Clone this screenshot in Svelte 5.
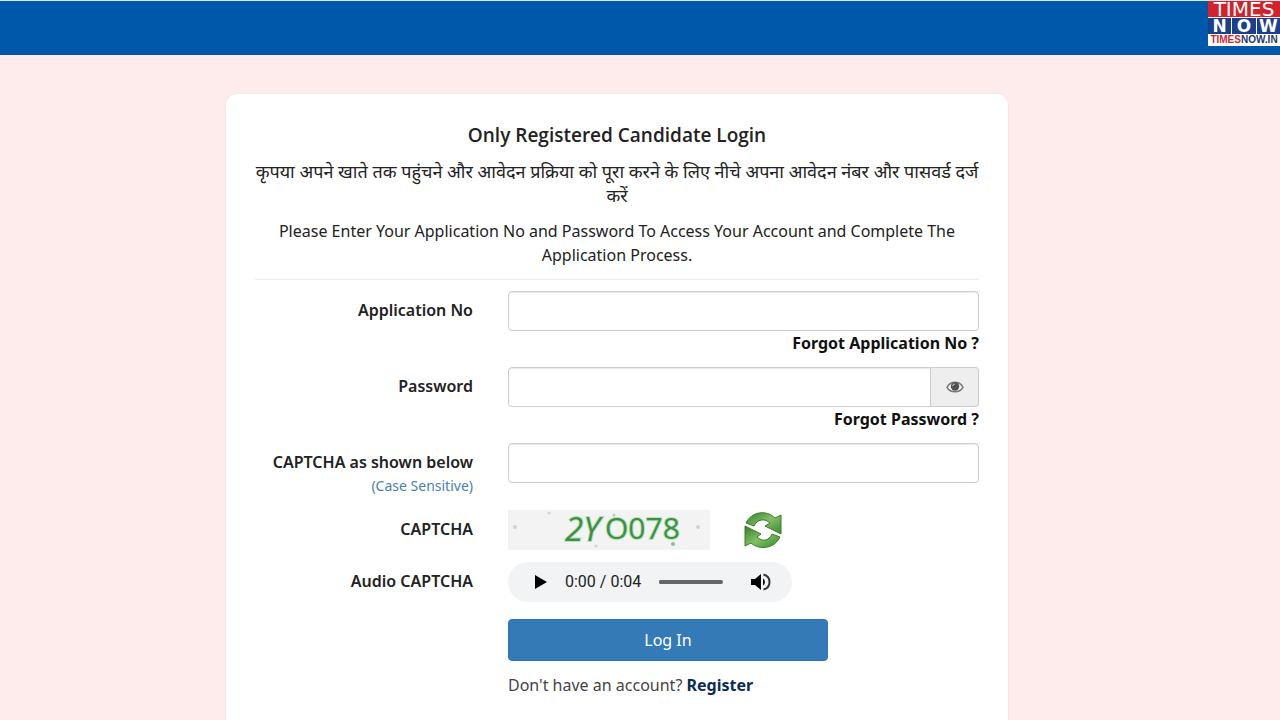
<script lang="ts">
	let applicationNo = $state('');
	let password = $state('');
	let captcha = $state('');
	let showPassword = $state(false);
	let position = $state(0);

	function handleSubmit(e: SubmitEvent) {
		e.preventDefault();
	}
</script>

<div class="page">
	<header class="topbar">
		<a class="brand" href="#home" aria-label="Times Now">
			<span class="brand-times">TIMES</span>
			<span class="brand-now"><b>N</b><b>O</b><b>W</b></span>
			<span class="brand-site"><i>TIMES</i>NOW.IN</span>
		</a>
	</header>

	<div class="content">
		<main class="card">
			<h1 class="title">Only Registered Candidate Login</h1>
			<p class="intro hindi" lang="hi">कृपया अपने खाते तक पहुंचने और आवेदन प्रक्रिया को पूरा करने के लिए नीचे अपना आवेदन नंबर और पासवर्ड दर्ज करें</p>
			<p class="intro">Please Enter Your Application No and Password To Access Your Account and Complete The Application Process.</p>
			<hr />

			<form onsubmit={handleSubmit}>
				<div class="row">
					<label for="application-no">Application No</label>
					<div class="field">
						<input id="application-no" class="control" type="text" bind:value={applicationNo} />
						<a class="forgot" href="#forgot-application">Forgot Application No ?</a>
					</div>
				</div>

				<div class="row">
					<label for="password">Password</label>
					<div class="field">
						<div class="input-group">
							<input id="password" class="control" type={showPassword ? 'text' : 'password'} bind:value={password} />
							<button class="eye" type="button" aria-label="Show password" onclick={() => (showPassword = !showPassword)}>
								<svg width="18" height="14" viewBox="0 0 18 14">
									<path d="M1 7.300C4.500 0.700 13.500 0.700 17 7.300C13.500 13.300 4.500 13.300 1 7.300Z" fill="#f4f4f4" stroke="#777" stroke-width="1.500" />
									<circle cx="9" cy="6.500" r="4.200" fill="#505050" />
									<path d="M6.700 6.200A2.400 2.400 0 0 1 8.800 4" fill="none" stroke="#ddd" stroke-width="1" />
								</svg>
							</button>
						</div>
						<a class="forgot" href="#forgot-password">Forgot Password ?</a>
					</div>
				</div>

				<div class="row">
					<label for="captcha">CAPTCHA as shown below <small>(Case Sensitive)</small></label>
					<div class="field">
						<input id="captcha" class="control" type="text" bind:value={captcha} />
					</div>
				</div>

				<div class="row">
					<span class="label">CAPTCHA</span>
					<div class="captcha-line">
						<svg class="captcha" width="202" height="40" viewBox="0 0 202 40">
							<rect width="202" height="40" fill="#f3f3f3" />
							<g fill="#cfd4cf">
								<circle cx="41" cy="3" r="1.500" />
								<circle cx="7" cy="17" r="2" />
								<circle cx="190" cy="17" r="2" />
								<circle cx="88" cy="36" r="1.500" />
								<circle cx="165" cy="34" r="2" fill="#8cbf8c" />
								<circle cx="106" cy="5" r="1.500" fill="#a9d8a9" />
							</g>
							<g class="captcha-text">
								<text x="57" y="31" font-size="33" font-style="italic">2Y</text>
								<text x="97" y="29" font-size="30">O078</text>
							</g>
						</svg>
						<button class="refresh" type="button" aria-label="Refresh captcha">
							<svg width="38" height="38" viewBox="0 0 38 38">
								<defs>
									<linearGradient id="leaf" x1="0" y1="0" x2="1" y2="1">
										<stop offset="0" stop-color="#347d2b" />
										<stop offset="0.500" stop-color="#84bd68" />
										<stop offset="1" stop-color="#378a2a" />
									</linearGradient>
								</defs>
								<g fill="url(#leaf)" stroke="#33802a" stroke-width="1" stroke-linejoin="round">
									<path d="M2 12C7 1 22 -2 31 7L37 4V23L21 15L26 12C21 7 13 8 10 15Z" />
									<path d="M36 26C31 37 16 40 7 32L1 35V15L17 23L13 26C18 31 25 30 28 23Z" />
								</g>
							</svg>
						</button>
					</div>
				</div>

				<div class="row">
					<span class="label">Audio CAPTCHA</span>
					<div class="player">
						<button type="button" aria-label="Play">
							<svg width="12" height="14" viewBox="0 0 12 14"><path d="M0 0L12 7L0 14Z" /></svg>
						</button>
						<span class="time">0:00 / 0:04</span>
						<input type="range" min="0" max="4" aria-label="Audio position" bind:value={position} />
						<button type="button" aria-label="Mute">
							<svg width="20" height="18" viewBox="0 0 20 18">
								<path d="M0 6H4L10 1V17L4 12H0Z" />
								<path d="M12 5.500C14.500 7 14.500 11 12 12.500Z" />
								<path d="M12.500 1.500C20.500 3.500 20.500 14.500 12.500 16.500" fill="none" stroke="#333" stroke-width="2" />
							</svg>
						</button>
					</div>
				</div>

				<div class="row actions">
					<div class="field">
						<button class="submit" type="submit">Log In</button>
						<p class="signup">Don't have an account? <a href="#register">Register</a></p>
					</div>
				</div>
			</form>
		</main>
	</div>
</div>

<style>
	:global(body) {
		background: #feeced;
	}

	.page {
		min-height: 100vh;
		display: flex;
		flex-direction: column;
		background: #feeced;
		color: #222;
		font-family: "Noto Sans", "Open Sans", sans-serif;
		font-size: 16px;
		line-height: 24px;
	}

	.page,
	.page * {
		box-sizing: border-box;
	}

	.topbar {
		display: flex;
		justify-content: flex-end;
		height: 55px;
		background: #0058aa;
		border-top: 1px solid #dce9f4;
	}

	.brand {
		display: flex;
		flex-direction: column;
		width: 72px;
		height: 45px;
		background: #fff;
		text-align: center;
		text-decoration: none;
	}

	.brand-times {
		height: 16px;
		background: #d3222c;
		color: #fff;
		font-family: "DejaVu Sans", sans-serif;
		font-size: 20px;
		line-height: 17px;
	}

	.brand-now {
		display: flex;
		gap: 1px;
		height: 17px;
		padding-top: 1px;
	}

	.brand-now b {
		flex: 1;
		background: #1c3f8c;
		color: #fff;
		font-family: "DejaVu Sans", sans-serif;
		font-size: 17px;
		line-height: 16px;
	}

	.brand-site {
		color: #25376f;
		font-family: "Liberation Sans", sans-serif;
		font-size: 10px;
		font-weight: 700;
		line-height: 12px;
	}

	.brand-site i {
		color: #c92a35;
		font-style: normal;
	}

	/* wider right gutter keeps the card a little left of centre */
	.content {
		flex: 1;
		display: flex;
		justify-content: center;
		padding: 38px 46px 0 0;
	}

	.card {
		width: 100%;
		max-width: 784px;
		padding: 29px 29px 0;
		background: #fff;
		border: 1px solid #f7e6e6;
		border-bottom: none;
		border-radius: 12px 12px 0 0;
	}

	.title {
		margin: 0 0 12px;
		font-family: "Open Sans", sans-serif;
		font-size: 19px;
		font-weight: 600;
		line-height: 24px;
		text-align: center;
	}

	.intro {
		margin: 0 0 12px;
		text-align: center;
	}

	.hindi {
		font-size: 18px;
	}

	hr {
		height: 1px;
		margin: 0 0 11px;
		border: none;
		background: #ededed;
	}

	form {
		display: flex;
		flex-direction: column;
		gap: 12px;
	}

	.row {
		display: grid;
		grid-template-columns: 218px minmax(0, 1fr);
		column-gap: 35px;
	}

	label,
	.label {
		padding-top: 7px;
		font-weight: 600;
		text-align: right;
	}

	label small {
		display: block;
		color: #4a7fb0;
		font-size: 14px;
		font-weight: 400;
	}

	.field {
		display: flex;
		flex-direction: column;
	}

	.control {
		width: 100%;
		height: 40px;
		padding: 6px 12px;
		border: 1px solid #ccc;
		border-radius: 4px;
		background: #fff;
		box-shadow: inset 0 1px 1px rgba(0, 0, 0, 0.08);
		font: inherit;
	}

	.input-group {
		display: flex;
	}

	.input-group .control {
		flex: 1;
		min-width: 0;
		border-radius: 4px 0 0 4px;
	}

	.eye {
		display: flex;
		align-items: center;
		justify-content: center;
		width: 48px;
		padding: 0;
		border: 1px solid #ccc;
		border-left: none;
		border-radius: 0 4px 4px 0;
		background: #eee;
		cursor: pointer;
	}

	.forgot {
		align-self: flex-end;
		color: #111;
		font-weight: 700;
		text-decoration: none;
	}

	.captcha-line {
		display: flex;
		align-items: center;
		gap: 34px;
	}

	.captcha {
		overflow: visible;
	}

	.captcha-text {
		fill: #3f8f47;
		font-family: "Open Sans", sans-serif;
		stroke: #b9e6b9;
		stroke-width: 2px;
		paint-order: stroke;
	}

	.refresh {
		display: flex;
		padding: 0;
		border: none;
		background: none;
		cursor: pointer;
	}

	.player {
		display: flex;
		align-items: center;
		width: 284px;
		max-width: 100%;
		height: 40px;
		padding: 0 21px 0 27px;
		border-radius: 20px;
		background: #f1f3f4;
	}

	.player button {
		display: flex;
		padding: 0;
		border: none;
		background: none;
		cursor: pointer;
	}

	.time {
		margin: 0 18px;
		font-family: Roboto, sans-serif;
		white-space: nowrap;
	}

	.player input {
		flex: 1;
		min-width: 0;
		height: 4px;
		margin: 0 28px 0 0;
		border-radius: 2px;
		background: #666;
		appearance: none;
	}

	.player input::-webkit-slider-thumb {
		width: 4px;
		height: 4px;
		border-radius: 2px;
		background: #666;
		appearance: none;
	}

	.actions {
		margin-top: 5px;
	}

	.actions .field {
		grid-column: 2;
	}

	.submit {
		width: 320px;
		max-width: 100%;
		height: 42px;
		border: 1px solid #2e75b5;
		border-radius: 4px;
		background: #337ab7;
		color: #fff;
		font: inherit;
		cursor: pointer;
	}

	.signup {
		margin: 12px 0 0;
		color: #444;
	}

	.signup a {
		color: #0b2c56;
		font-weight: 700;
		text-decoration: none;
	}
</style>
